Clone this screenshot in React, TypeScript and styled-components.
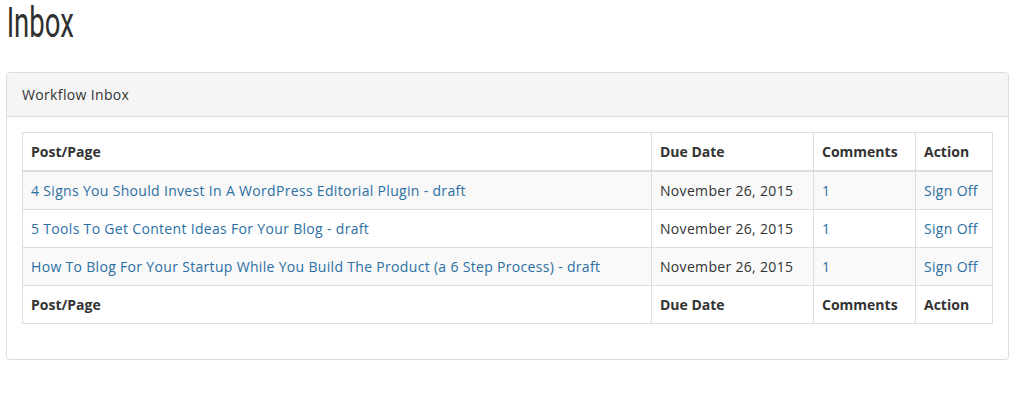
import React from "react";
import styled, { createGlobalStyle } from "styled-components";

const GlobalStyle = createGlobalStyle`
  html, body { margin: 0; padding: 0; background: #ffffff; }
  body { font-family: "Open Sans", "Liberation Sans", sans-serif; font-size: 14px; color: #333333; }
`;

const Page = styled.div`
  padding: 0 15px 0 6px;
`;

const Title = styled.h1`
  margin: 0;
  padding: 0 0 0 1px;
  font-family: "Roboto", "Liberation Sans", sans-serif;
  font-weight: 400;
  font-size: 43px;
  line-height: 45px;
  color: #2f2f2f;
  transform: scaleX(0.64);
  transform-origin: left center;
`;

const Panel = styled.section`
  margin-top: 27px;
  border: 1px solid #dddddd;
  border-radius: 4px;
  background: #ffffff;
  box-shadow: 0 1px 1px rgba(0, 0, 0, 0.05);
`;

const PanelHeading = styled.div`
  padding: 12px 15px 11px;
  background: #f5f5f5;
  border-bottom: 1px solid #dddddd;
  border-radius: 3px 3px 0 0;
  font-size: 14px;
  line-height: 20px;
  letter-spacing: 0.35px;
  color: #333333;
`;

const PanelBody = styled.div`
  padding: 15px 15px 35px;
`;

const Table = styled.table`
  width: 100%;
  table-layout: fixed;
  border-collapse: collapse;
  border: 1px solid #dddddd;
`;

const Cell = styled.td<{ $head?: boolean }>`
  padding: 8px;
  line-height: 21px;
  border: 1px solid #dddddd;
  font-weight: ${(p) => (p.$head ? 700 : 400)};
  letter-spacing: ${(p) => (p.$head ? "0" : "0.32px")};
  color: #333333;
  text-align: left;
  vertical-align: top;
  white-space: nowrap;
`;

const HeadRow = styled.tr<{ $top?: boolean }>`
  & > th {
    border-bottom-width: ${(p) => (p.$top ? "2px" : "1px")};
  }
`;

const BodyRow = styled.tr<{ $striped?: boolean }>`
  background: ${(p) => (p.$striped ? "#f9f9f9" : "#ffffff")};
`;

const Link = styled.a`
  color: #2b6fa3;
  text-decoration: none;
`;

const rows = [
  "4 Signs You Should Invest In A WordPress Editorial Plugin - draft",
  "5 Tools To Get Content Ideas For Your Blog - draft",
  "How To Blog For Your Startup While You Build The Product (a 6 Step Process) - draft",
];

const headers = ["Post/Page", "Due Date", "Comments", "Action"];

export default function App() {
  return (
    <>
      <GlobalStyle />
      <Page>
        <Title>Inbox</Title>
        <Panel>
          <PanelHeading>Workflow Inbox</PanelHeading>
          <PanelBody>
            <Table>
              <colgroup>
                <col style={{ width: 629 }} />
                <col style={{ width: 162 }} />
                <col style={{ width: 102 }} />
                <col />
              </colgroup>
              <thead>
                <HeadRow $top>
                  {headers.map((h) => (
                    <Cell as="th" $head key={h}>
                      {h}
                    </Cell>
                  ))}
                </HeadRow>
              </thead>
              <tbody>
                {rows.map((r, i) => (
                  <BodyRow key={r} $striped={i % 2 === 0}>
                    <Cell>
                      <Link href="#">{r}</Link>
                    </Cell>
                    <Cell>November 26, 2015</Cell>
                    <Cell>
                      <Link href="#">1</Link>
                    </Cell>
                    <Cell>
                      <Link href="#">Sign Off</Link>
                    </Cell>
                  </BodyRow>
                ))}
              </tbody>
              <tfoot>
                <HeadRow>
                  {headers.map((h) => (
                    <Cell as="th" $head key={h}>
                      {h}
                    </Cell>
                  ))}
                </HeadRow>
              </tfoot>
            </Table>
          </PanelBody>
        </Panel>
      </Page>
    </>
  );
}
